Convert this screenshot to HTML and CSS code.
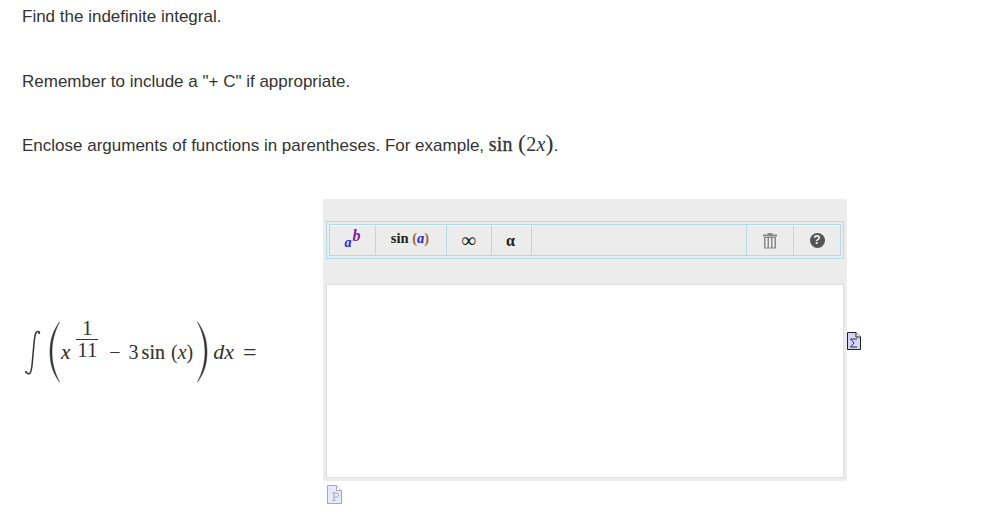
FILE: index.html
```html
<!DOCTYPE html>
<html lang="en">
<head>
<meta charset="utf-8">
<title>Find the indefinite integral</title>
<link rel="stylesheet" href="styles.css">
</head>
<body>
<main class="page">
  <p class="line">Find the indefinite integral.</p>
  <p class="line">Remember to include a "+ C" if appropriate.</p>
  <p class="line">Enclose arguments of functions in parentheses. For example, <span class="m-ex"><span class="up">sin</span> <span class="pn">(</span>2<i>x</i><span class="pn">)</span></span>.</p>

  <section class="question">
    <div class="equation">
      <svg class="integral" width="24" height="60" viewBox="0 0 24 60" aria-hidden="true"><path d="M18.500 10.500c-.8-1.500-2.700-1.400-3.500.2-1.200 2.400-1.700 7-2.100 11.800l-1.700 19c-.4 4.500-1 7.500-2 9.300-.9 1.500-3 1.400-3.600-.2" fill="none" stroke="#333" stroke-width="1.500" stroke-linecap="round"/><circle cx="18" cy="11" r="1.100" fill="#333"/><circle cx="5" cy="50" r="1.100" fill="#333"/></svg>
      <svg class="paren paren-l" width="13" height="62" viewBox="0 0 13 62" aria-hidden="true"><path d="M11.500 1C5 10 2 19 2 31s3 21 9.500 30C6.500 51 4 42 4 31S6.500 11 11.500 1z" fill="#333" stroke="#333" stroke-width=".5"/></svg>
      <i class="x">x</i>
      <span class="frac"><span class="num">1</span><span class="den">11</span></span>
      <span class="minus">−</span>
      <span class="three">3</span>
      <span class="sin">sin</span>
      <span class="arg">(<i>x</i>)</span>
      <svg class="paren paren-r" width="13" height="62" viewBox="0 0 13 62" aria-hidden="true"><path d="M1.500 1C8 10 11 19 11 31s-3 21-9.500 30C6.500 51 9 42 9 31S6.500 11 1.500 1z" fill="#333" stroke="#333" stroke-width=".5"/></svg>
      <span class="dx"><i>dx</i></span>
      <span class="eq">=</span>
    </div>

    <div class="widget">
      <div class="panel">
        <div class="toolbar-frame">
          <div class="toolbar">
            <button class="tool t-pow" type="button"><span class="pow"><i class="blue">a</i><sup class="purple">b</sup></span></button>
            <button class="tool t-fn" type="button"><span class="fn">sin <span class="orange">(</span><i class="blue">a</i><span class="orange">)</span></span></button>
            <button class="tool t-inf" type="button"><span class="inf">∞</span></button>
            <button class="tool t-alpha" type="button"><span class="alpha">α</span></button>
            <div class="tool-gap"></div>
            <button class="tool t-icon" type="button" aria-label="Clear">
              <svg width="16" height="17" viewBox="0 0 16 17"><path d="M5.500 1h5v1.500h-5zM1 2.500h14v2H1z" fill="#888"/><path d="M2 5h12v11.500H2z" fill="#8a8a8a"/><path d="M3.500 6h2v9.500h-2zM7 6h2v9.500H7zM10.500 6h2v9.500h-2z" fill="#eee"/></svg>
            </button>
            <button class="tool t-icon" type="button" aria-label="Help">
              <span class="help">?</span>
            </button>
          </div>
        </div>
        <div class="editor"></div>
      </div>
      <svg class="doc doc-sigma" width="14" height="18" viewBox="0 0 14 18" aria-hidden="true"><path d="M.5.500h8.500l4.500 4.500v12.500H.5z" fill="#d4d4f8" stroke="#222"/><path d="M9 .5v4.500h4.500" fill="#fff" stroke="#222"/><path d="M10 7H3.500l3.500 4-3.500 4H10" fill="none" stroke="#334"/></svg>
      <svg class="doc doc-p" width="15" height="19" viewBox="0 0 15 19" aria-hidden="true"><path d="M.5.500h9l5 5v13H.5z" fill="#e6e8fb" stroke="#a8a8a8"/><path d="M9.500.5v5h5" fill="#fff" stroke="#a8a8a8"/><path d="M5 8h4.500c1.500 0 2 1 2 2s-.5 2-2 2H7M7 8v7.500M5.500 15.500h3" fill="none" stroke="#aaa"/></svg>
    </div>
  </section>
</main>
</body>
</html>
```

FILE: styles.css
```css
* { box-sizing: border-box; }
html, body { margin: 0; padding: 0; background: #fff; }
body { width: 998px; height: 519px; overflow: hidden; font-family: "Liberation Sans", Arial, sans-serif; font-size: 17px; color: #333; }
.page { padding: 8px 0 0 22px; }
.line { margin: 0 0 46px; height: 18px; line-height: 18px; white-space: nowrap; }
.line:first-child { margin-bottom: 47px; }

.m-ex { font-family: "Liberation Serif", serif; font-size: 20px; letter-spacing: .2px; line-height: 0; }
.m-ex .up { -webkit-text-stroke: .3px #333; }
.m-ex .pn { font-size: 24px; line-height: 0; }

.question { display: flex; align-items: center; margin-top: -2px; }
.equation { width: 301px; height: 282px; display: flex; align-items: center; font-family: "Liberation Serif", serif; font-size: 20px; color: #333; padding-top: 24px; }
.integral { flex: none; margin-left: -1px; margin-right: 1px; }
.paren { flex: none; }
.paren-l { margin-left: 2px; }
.paren-r { margin-left: 3px; }
.x { font-size: 21px; letter-spacing: 1px; -webkit-text-stroke: .2px #333; }
.frac { display: inline-flex; flex-direction: column; align-items: center; margin: 0 0 26px 5px; font-size: 21px; line-height: 21px; }
.num { border-bottom: 1px solid #333; width: 22px; text-align: center; }
.den { line-height: 20px; }
.minus { margin-left: 11px; }
.three { margin-left: 8px; }
.sin { margin-left: 3px; -webkit-text-stroke: .2px #333; }
.arg { margin-left: 6px; }
.dx { margin-left: 4px; font-size: 22px; }
.eq { margin-left: 9px; font-size: 24px; }

.widget { position: relative; width: 524px; height: 282px; }
.panel { background: #ececec; height: 282px; padding: 22px 3px 3px; border-radius: 2px; }
.toolbar-frame { border: 1px solid #aedce8; padding: 2px; height: 38px; }
.toolbar { display: flex; height: 32px; border: 1px solid #aedce8; background: #ececec; }
.tool { flex: none; margin: 0; padding: 0; height: 30px; background: #ececec; border: 0; border-right: 1px solid #aedce8; border-top: 1px solid #f7f7f7; display: flex; align-items: center; justify-content: center; color: #222; font-family: "Liberation Serif", serif; }
.tool-gap { flex: 1; border-right: 1px solid #aedce8; }
.t-pow { width: 46px; }
.t-fn { width: 71px; }
.t-inf { width: 45px; }
.t-alpha { width: 40px; }
.t-icon { width: 47px; }
.t-icon:last-child { width: 46px; border-right: 0; }
.pow { font-size: 14px; font-weight: 700; padding-top: 4px; }
.pow sup { font-size: 16px; vertical-align: 6px; line-height: 0; margin-left: 1px; }
.blue { color: #2222ee; }
.purple { color: #8a1a94; font-style: italic; }
.orange { color: #a06a20; }
.fn { font-size: 14.5px; font-weight: 700; padding: 0 2px 4px 0; }
.inf { font-size: 20px; font-weight: 700; }
.alpha { font-size: 16px; font-weight: 700; padding-right: 2px; }
.help { width: 15px; height: 15px; border-radius: 50%; background: #555; color: #f0f0f0; font: 700 12px/15px "Liberation Sans", sans-serif; text-align: center; }
.editor { margin-top: 25px; height: 194px; background: #fff; border: 1px solid #dedede; }
.doc { position: absolute; }
.doc-sigma { left: 524px; top: 133px; }
.doc-p { left: 4px; top: 286px; }
```
